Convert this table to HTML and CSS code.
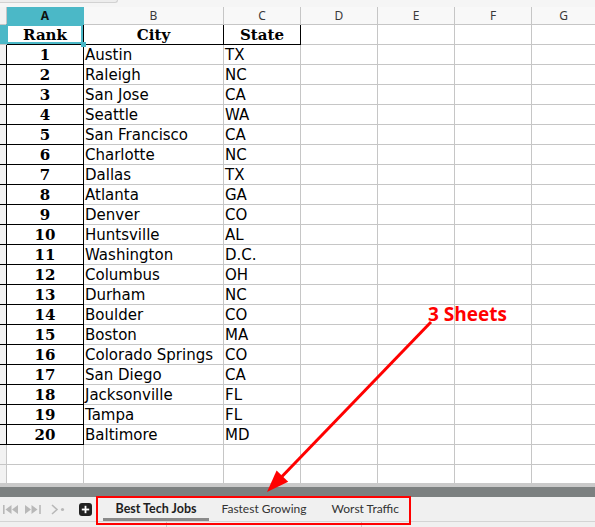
FILE: index.html
```html
<!DOCTYPE html>
<html>
<head>
<meta charset="utf-8">
<link rel="stylesheet" href="styles.css">
</head>
<body>
<div class="app">
  <div class="topstrip"><div class="topbox"></div></div>
  <div class="sheet">
    <div class="rh corner"></div><div class="ch ch-sel">A</div><div class="ch">B</div><div class="ch">C</div><div class="ch">D</div><div class="ch">E</div><div class="ch">F</div><div class="ch">G</div>

    <div class="rh rh-sel"></div><div class="c k th selcell">Rank</div><div class="c k th">City</div><div class="c k th">State</div><div class="c"></div><div class="c"></div><div class="c"></div><div class="c"></div>
    <div class="rh k"></div><div class="c k num">1</div><div class="c">Austin</div><div class="c">TX</div><div class="c"></div><div class="c"></div><div class="c"></div><div class="c"></div>
    <div class="rh k"></div><div class="c k num">2</div><div class="c">Raleigh</div><div class="c">NC</div><div class="c"></div><div class="c"></div><div class="c"></div><div class="c"></div>
    <div class="rh k"></div><div class="c k num">3</div><div class="c">San Jose</div><div class="c">CA</div><div class="c"></div><div class="c"></div><div class="c"></div><div class="c"></div>
    <div class="rh k"></div><div class="c k num">4</div><div class="c">Seattle</div><div class="c">WA</div><div class="c"></div><div class="c"></div><div class="c"></div><div class="c"></div>
    <div class="rh k"></div><div class="c k num">5</div><div class="c">San Francisco</div><div class="c">CA</div><div class="c"></div><div class="c"></div><div class="c"></div><div class="c"></div>
    <div class="rh k"></div><div class="c k num">6</div><div class="c">Charlotte</div><div class="c">NC</div><div class="c"></div><div class="c"></div><div class="c"></div><div class="c"></div>
    <div class="rh k"></div><div class="c k num">7</div><div class="c">Dallas</div><div class="c">TX</div><div class="c"></div><div class="c"></div><div class="c"></div><div class="c"></div>
    <div class="rh k"></div><div class="c k num">8</div><div class="c">Atlanta</div><div class="c">GA</div><div class="c"></div><div class="c"></div><div class="c"></div><div class="c"></div>
    <div class="rh k"></div><div class="c k num">9</div><div class="c">Denver</div><div class="c">CO</div><div class="c"></div><div class="c"></div><div class="c"></div><div class="c"></div>
    <div class="rh k"></div><div class="c k num">10</div><div class="c">Huntsville</div><div class="c">AL</div><div class="c"></div><div class="c"></div><div class="c"></div><div class="c"></div>
    <div class="rh k"></div><div class="c k num">11</div><div class="c">Washington</div><div class="c">D.C.</div><div class="c"></div><div class="c"></div><div class="c"></div><div class="c"></div>
    <div class="rh k"></div><div class="c k num">12</div><div class="c">Columbus</div><div class="c">OH</div><div class="c"></div><div class="c"></div><div class="c"></div><div class="c"></div>
    <div class="rh k"></div><div class="c k num">13</div><div class="c">Durham</div><div class="c">NC</div><div class="c"></div><div class="c"></div><div class="c"></div><div class="c"></div>
    <div class="rh k"></div><div class="c k num">14</div><div class="c">Boulder</div><div class="c">CO</div><div class="c"></div><div class="c"></div><div class="c"></div><div class="c"></div>
    <div class="rh k"></div><div class="c k num">15</div><div class="c">Boston</div><div class="c">MA</div><div class="c"></div><div class="c"></div><div class="c"></div><div class="c"></div>
    <div class="rh k"></div><div class="c k num">16</div><div class="c">Colorado Springs</div><div class="c">CO</div><div class="c"></div><div class="c"></div><div class="c"></div><div class="c"></div>
    <div class="rh k"></div><div class="c k num">17</div><div class="c">San Diego</div><div class="c">CA</div><div class="c"></div><div class="c"></div><div class="c"></div><div class="c"></div>
    <div class="rh k"></div><div class="c k num">18</div><div class="c">Jacksonville</div><div class="c">FL</div><div class="c"></div><div class="c"></div><div class="c"></div><div class="c"></div>
    <div class="rh k"></div><div class="c k num">19</div><div class="c">Tampa</div><div class="c">FL</div><div class="c"></div><div class="c"></div><div class="c"></div><div class="c"></div>
    <div class="rh k"></div><div class="c k num">20</div><div class="c">Baltimore</div><div class="c">MD</div><div class="c"></div><div class="c"></div><div class="c"></div><div class="c"></div>
    <div class="rh"></div><div class="c"></div><div class="c"></div><div class="c"></div><div class="c"></div><div class="c"></div><div class="c"></div><div class="c"></div>
    <div class="rh last"></div><div class="c last"></div><div class="c last"></div><div class="c last"></div><div class="c last"></div><div class="c last"></div><div class="c last"></div><div class="c last"></div>
  </div>
  <div class="hband"></div>
  <div class="hbar"></div>
  <div class="tabbar">
    <div class="nav">
      <svg class="ico ico-first" width="16" height="9" viewBox="0 0 16 9"><rect x="0" y="0" width="1.6" height="9" fill="#b8b8b8"/><polygon points="8.5,0 2.5,4.5 8.5,9" fill="#b8b8b8"/><polygon points="15,0 9,4.5 15,9" fill="#b8b8b8"/></svg>
      <svg class="ico ico-last" width="16" height="9" viewBox="0 0 16 9"><polygon points="0,0 6,4.5 0,9" fill="#b8b8b8"/><polygon points="6.5,0 12.5,4.5 6.5,9" fill="#b8b8b8"/><rect x="14.2" y="0" width="1.6" height="9" fill="#b8b8b8"/></svg>
      <svg class="ico ico-more" width="14" height="11" viewBox="0 0 14 11"><polyline points="1,1 6,5.5 1,10" fill="none" stroke="#b8b8b8" stroke-width="1.6"/><circle cx="11.5" cy="5.5" r="1.6" fill="#b8b8b8"/></svg>
      <svg class="ico ico-add" width="13" height="13" viewBox="0 0 13 13"><rect x="0" y="0" width="13" height="13" rx="3" fill="#222"/><rect x="5.6" y="2.8" width="1.8" height="7.4" fill="#fff"/><rect x="2.8" y="5.6" width="7.4" height="1.8" fill="#fff"/></svg>
    </div>
    <div class="tabs">
      <div class="tab active">Best Tech Jobs</div>
      <div class="tab">Fastest Growing</div>
      <div class="tab">Worst Traffic</div>
    </div>
  </div>
  <div class="status">
    <div class="sb sb1"></div>
    <div class="sb sb2"></div>
    <div class="sb sb3"></div>
  </div>

  <div class="annot-box"></div>
  <div class="annot-label">3 Sheets</div>
  <svg class="annot-arrow" width="595" height="527" viewBox="0 0 595 527">
    <line x1="431" y1="322" x2="282" y2="476.5" stroke="#ff0000" stroke-width="3"/>
    <polygon points="267,492 288.2,481.8 276.6,470.6" fill="#ff0000"/>
  </svg>
</div>
</body>
</html>
```
FILE: styles.css
```css
html, body {
  margin: 0;
  padding: 0;
  background: #ffffff;
}

.app {
  position: relative;
  width: 595px;
  height: 527px;
  overflow: hidden;
  font-family: "DejaVu Sans", sans-serif;
}

.topstrip {
  height: 7px;
  background: #f5f5f5;
}

.topbox {
  width: 118px;
  height: 3px;
  background: #ededed;
  border-right: 1px solid #d2d2d2;
  border-bottom: 1px solid #d2d2d2;
  border-bottom-right-radius: 3px;
  box-sizing: border-box;
}

.sheet {
  display: grid;
  grid-template-columns: 7px 77px 140px 77px 77px 77px 77px 64px;
  grid-template-rows: 18px repeat(22, 20px) 18px;
}

.sheet > div {
  box-sizing: border-box;
  border-right: 1px solid #c6c6c6;
  border-bottom: 1px solid #c6c6c6;
  overflow: hidden;
  white-space: nowrap;
}

.rh {
  background: #f2f2f2;
}

.corner {
  background: #f2f2f2;
}

.ch {
  background: #f8f8f8;
  font-family: "Noto Sans", sans-serif;
  font-size: 12px;
  line-height: 17px;
  text-align: center;
  color: #3a3a3a;
}

.sheet > .ch-sel {
  background: #4bb8c7;
  color: #111;
  font-weight: bold;
  border-bottom-color: #4bb8c7;
  border-right-color: #4bb8c7;
}

.sheet > .rh-sel {
  background: #4bb8c7;
  border-right-color: #4bb8c7;
}

.c {
  font-family: "DejaVu Sans", sans-serif;
  font-size: 15px;
  line-height: 19px;
  padding-left: 1px;
  padding-top: 1px;
  color: #000;
}

.sheet > .k {
  border-right-color: #000;
  border-bottom-color: #000;
}

.th {
  font-family: "DejaVu Serif", serif;
  font-weight: bold;
  text-align: center;
  padding-left: 0;
}

.num {
  font-family: "DejaVu Serif", serif;
  font-weight: bold;
  text-align: center;
  padding-left: 0;
}

.sheet > .last {
  border-bottom: none;
}

.selcell {
  position: relative;
  overflow: visible !important;
}

.selcell::after {
  content: "";
  position: absolute;
  left: -1px;
  top: -1px;
  right: 0;
  bottom: 0;
  border: 2px solid #4bb8c7;
}

.selcell::before {
  content: "";
  position: absolute;
  right: -3px;
  bottom: -3px;
  width: 5px;
  height: 5px;
  background: #4bb8c7;
  z-index: 2;
}

.hband {
  height: 4px;
  background: #cacaca;
}

.hbar {
  height: 10px;
  background: #7c8080;
}

.tabbar {
  height: 24px;
  background: #f0f0f0;
  border-bottom: 1px solid #d4d4d4;
  display: flex;
  align-items: stretch;
}

.nav {
  width: 103px;
  display: flex;
  align-items: center;
  padding-left: 3px;
  box-sizing: border-box;
}

.ico {
  display: block;
  flex: none;
}

.ico-last {
  margin-left: 6px;
}

.ico-more {
  margin-left: 10px;
}

.ico-add {
  margin-left: 14px;
}

.tabs {
  display: flex;
  align-items: stretch;
}

.tab {
  font-family: Lato, sans-serif;
  font-size: 12px;
  color: #333;
  padding: 0 12.5px;
  display: flex;
  align-items: center;
  box-sizing: border-box;
  border-bottom: 3px solid transparent;
  padding-top: 2px;
}

.tab.active {
  font-weight: bold;
  color: #1e1e1e;
  font-size: 12.5px;
  border-bottom-color: #8a8a8a;
}

.status {
  height: 5px;
  background: #f0f0f0;
  display: flex;
}

.sb {
  height: 100%;
  box-sizing: border-box;
}

.sb1 {
  width: 167px;
  border-right: 1px solid #c8c8c8;
}

.sb2 {
  width: 195px;
  border-right: 1px solid #c8c8c8;
}

.sb3 {
  flex: 1;
}

.annot-box {
  position: absolute;
  left: 96px;
  top: 496px;
  width: 315px;
  height: 29px;
  box-sizing: border-box;
  border: 2.5px solid #ff0000;
}

.annot-label {
  position: absolute;
  left: 428px;
  top: 305px;
  font-family: "Open Sans", sans-serif;
  font-weight: bold;
  font-size: 19px;
  line-height: 19px;
  color: #ff0000;
  white-space: nowrap;
}

.annot-arrow {
  position: absolute;
  left: 0;
  top: 0;
  pointer-events: none;
}
```
